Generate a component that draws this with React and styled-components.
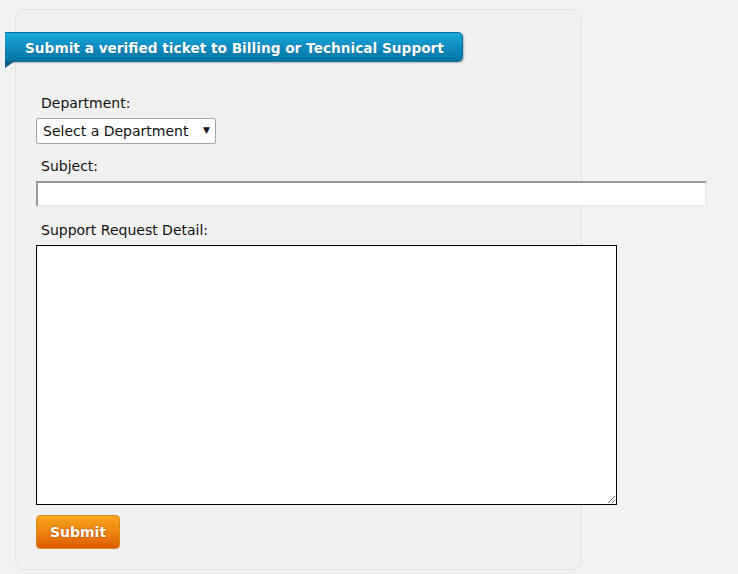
import React from "react";
import styled, { createGlobalStyle } from "styled-components";

const Global = createGlobalStyle`
  html, body { margin: 0; padding: 0; background: #f2f2f2; }
  body { font-family: "DejaVu Sans", Verdana, sans-serif; color: #111; }
  * { box-sizing: border-box; }
`;

const Page = styled.div`
  width: 738px;
  height: 574px;
  overflow: hidden;
  padding: 9px 0 0 15px;
`;

const Panel = styled.section`
  width: 567px;
  height: 561px;
  background: #f1f1f1;
  border: 1px solid #e3e3e3;
  border-radius: 10px;
  padding-top: 22px;
`;

const Banner = styled.h2`
  position: relative;
  display: inline-block;
  margin: 0 0 0 -11px;
  height: 30px;
  padding: 0 18px 0 20px;
  line-height: 30px;
  font-size: 13.7px;
  font-weight: bold;
  color: #fff;
  white-space: nowrap;
  background: linear-gradient(to bottom, #18a8da 0%, #0e8cc0 50%, #0873a1 100%);
  border: 1px solid #0b6f9c;
  border-left: none;
  border-radius: 0 5px 5px 0;
  box-shadow: 1px 1px 2px rgba(0, 0, 0, 0.25);
  text-shadow: 0 0 1px rgba(0, 40, 70, 0.4);
  &::after {
    content: "";
    position: absolute;
    left: 0;
    top: 100%;
    width: 0;
    height: 0;
    border-top: 7px solid #0b5f88;
    border-left: 10px solid transparent;
    transform: scaleX(-1);
  }
`;

const Form = styled.form`
  display: flex;
  flex-direction: column;
  align-items: flex-start;
  padding: 34px 0 0 20px;
`;

const Label = styled.label`
  display: block;
  padding-left: 5px;
  font-size: 14px;
  line-height: 15px;
  color: #111;
  margin-top: ${(p) => p.$gap || 0}px;
  margin-bottom: 7px;
`;

const SelectWrap = styled.div`
  position: relative;
  width: 180px;
  height: 26px;
`;

const Select = styled.select`
  appearance: none;
  -webkit-appearance: none;
  width: 100%;
  height: 100%;
  margin: 0;
  padding: 0 0 0 6px;
  font-family: "DejaVu Sans", Verdana, sans-serif;
  font-size: 14px;
  color: #111;
  background: #fff;
  border: 1px solid #a6a6a6;
  border-radius: 2px;
`;

const Arrow = styled.span`
  position: absolute;
  right: 6px;
  top: 7px;
  font-size: 9px;
  line-height: 10px;
  color: #111;
  pointer-events: none;
`;

const TextInput = styled.input`
  width: 671px;
  height: 26px;
  margin: 0;
  padding: 0 4px;
  background: #fff;
  font-family: "DejaVu Sans", Verdana, sans-serif;
  font-size: 13px;
  border-top: 2px solid #9a9a9a;
  border-left: 2px solid #9a9a9a;
  border-right: 2px solid #ececec;
  border-bottom: 2px solid #ececec;
  outline: none;
`;

const TextArea = styled.textarea`
  display: block;
  width: 581px;
  height: 260px;
  margin: 0;
  background: #fff;
  border: 1px solid #000;
  font-family: "DejaVu Sans", Verdana, sans-serif;
  font-size: 13px;
  resize: both;
`;

const SubmitButton = styled.button`
  margin-top: 10px;
  width: 84px;
  height: 34px;
  padding: 0;
  font-family: "DejaVu Sans", Verdana, sans-serif;
  font-size: 14px;
  font-weight: bold;
  color: #fff;
  text-shadow: 0 0 2px rgba(150, 50, 0, 0.8);
  background: linear-gradient(to bottom, #f8a61e 0%, #ee8410 50%, #dc5a00 100%);
  border: 1px solid #d58a1c;
  border-radius: 4px;
  cursor: pointer;
`;

export default function App() {
  return (
    <>
      <Global />
      <Page>
        <Panel>
          <Banner>Submit a verified ticket to Billing or Technical Support</Banner>
          <Form onSubmit={(e) => e.preventDefault()}>
            <Label htmlFor="dept">Department:</Label>
            <SelectWrap>
              <Select id="dept" defaultValue="">
                <option value="">Select a Department</option>
                <option value="billing">Billing</option>
                <option value="tech">Technical Support</option>
              </Select>
              <Arrow>▼</Arrow>
            </SelectWrap>
            <Label htmlFor="subject" $gap={15}>Subject:</Label>
            <TextInput id="subject" type="text" />
            <Label htmlFor="detail" $gap={16}>Support Request Detail:</Label>
            <TextArea id="detail" />
            <SubmitButton type="submit">Submit</SubmitButton>
          </Form>
        </Panel>
      </Page>
    </>
  );
}
